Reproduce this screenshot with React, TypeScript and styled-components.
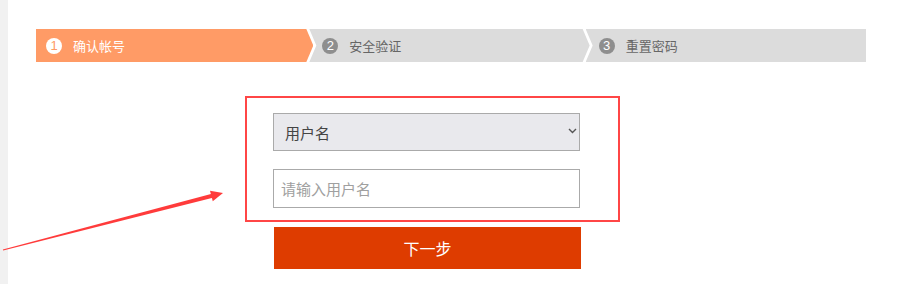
import React from "react";
import styled, { createGlobalStyle } from "styled-components";

const Global = createGlobalStyle`
  html, body { margin: 0; padding: 0; background: #fff; overflow: hidden; }
  body { font-family: "Noto Sans CJK SC", "Noto Sans", sans-serif; }
  * { box-sizing: border-box; }
`;

const Page = styled.div`
  position: relative;
  display: flex;
  width: 920px;
  height: 284px;
`;

const SideStrip = styled.div`
  width: 8px;
  flex: none;
  background: #f1f1f1;
`;

const Main = styled.div`
  flex: 1;
  display: flex;
  flex-direction: column;
  padding-top: 29px;
  padding-left: 28px;
`;

const Steps = styled.div`
  display: flex;
  width: 830px;
  height: 33px;
`;

type StepProps = { $pos: "first" | "mid" | "last"; $active?: boolean };

const clipFor = (pos: StepProps["$pos"]) => {
  if (pos === "first")
    return "polygon(0 0, calc(100% - 7px) 0, 100% 50%, calc(100% - 7px) 100%, 0 100%)";
  if (pos === "mid")
    return "polygon(0 0, calc(100% - 7px) 0, 100% 50%, calc(100% - 7px) 100%, 0 100%, 7px 50%)";
  return "polygon(0 0, 100% 0, 100% 100%, 0 100%, 7px 50%)";
};

const Step = styled.div<StepProps>`
  flex: 1;
  display: flex;
  align-items: center;
  gap: 11px;
  margin-left: ${(p) => (p.$pos === "first" ? "0" : "-4px")};
  padding-left: ${(p) => (p.$pos === "first" ? "10px" : "13px")};
  background: ${(p) => (p.$active ? "#ff9b66" : "#dcdcdc")};
  color: ${(p) => (p.$active ? "#fff" : "#666")};
  font-size: 13px;
  clip-path: ${(p) => clipFor(p.$pos)};
`;

const StepNum = styled.span<{ $active?: boolean }>`
  width: 16px;
  height: 16px;
  border-radius: 50%;
  display: flex;
  align-items: center;
  justify-content: center;
  font-family: "Liberation Sans", Arial, sans-serif;
  font-size: 13px;
  font-weight: normal;
  background: ${(p) => (p.$active ? "#fff" : "#8e8e8e")};
  color: ${(p) => (p.$active ? "#ff9b66" : "#fff")};
`;

const StepLabel = styled.span`
  line-height: 1;
`;

const FormArea = styled.div`
  display: flex;
  flex-direction: column;
  margin-top: 34px;
  margin-left: 209px;
`;

const MarkedBox = styled.div`
  width: 375px;
  height: 126px;
  border: 2px solid #ff4646;
  padding: 15px 0 0 26px;
  display: flex;
  flex-direction: column;
  gap: 18px;
`;

const SelectWrap = styled.div`
  position: relative;
  width: 307px;
  height: 38px;
`;

const Select = styled.select`
  appearance: none;
  width: 100%;
  height: 100%;
  border: 1px solid #aaa;
  background: #e9e9ed;
  color: #444;
  font-family: "Noto Sans CJK SC", sans-serif;
  font-size: 15px;
  padding: 0 0 0 11px;
  outline: none;
  border-radius: 0;
`;

const Chevron = styled.svg`
  position: absolute;
  right: 3px;
  top: 15px;
  pointer-events: none;
`;

const TextInput = styled.input`
  width: 307px;
  height: 39px;
  border: 1px solid #aaa;
  padding: 0 0 0 7px;
  font-family: "Noto Sans CJK SC", sans-serif;
  font-size: 15px;
  color: #333;
  outline: none;
  &::placeholder { color: #a0a0a0; }
`;

const NextButton = styled.button`
  width: 307px;
  height: 42px;
  margin-top: 5px;
  margin-left: 29px;
  border: none;
  background: #de3c00;
  color: #fff;
  font-family: "Noto Sans CJK SC", sans-serif;
  font-size: 16px;
  cursor: pointer;
`;

const Annotation = styled.svg`
  position: absolute;
  left: 0;
  top: 0;
  pointer-events: none;
`;

export default function App() {
  // arrow geometry
  const sx = 3, sy = 250, tx = 223, ty = 193;
  const dx = tx - sx, dy = ty - sy;
  const len = Math.hypot(dx, dy);
  const ux = dx / len, uy = dy / len;
  const px = -uy, py = ux;
  const headL = 12, headW = 5.5;
  const bx = tx - ux * headL, by = ty - uy * headL;
  const shaftEnd = 2;
  const startW = 0.5;
  const shaft = [
    [sx + px * startW, sy + py * startW],
    [bx + ux * 1 + px * shaftEnd, by + uy * 1 + py * shaftEnd],
    [bx + ux * 1 - px * shaftEnd, by + uy * 1 - py * shaftEnd],
    [sx - px * startW, sy - py * startW],
  ]
    .map((p) => p.join(","))
    .join(" ");
  const head = [
    [tx, ty],
    [bx + px * headW, by + py * headW],
    [bx - px * headW, by - py * headW],
  ]
    .map((p) => p.join(","))
    .join(" ");

  return (
    <>
      <Global />
      <Page>
        <SideStrip />
        <Main>
          <Steps>
            <Step $pos="first" $active>
              <StepNum $active>1</StepNum>
              <StepLabel>确认帐号</StepLabel>
            </Step>
            <Step $pos="mid">
              <StepNum>2</StepNum>
              <StepLabel>安全验证</StepLabel>
            </Step>
            <Step $pos="last">
              <StepNum>3</StepNum>
              <StepLabel>重置密码</StepLabel>
            </Step>
          </Steps>
          <FormArea>
            <MarkedBox>
              <SelectWrap>
                <Select defaultValue="username">
                  <option value="username">用户名</option>
                </Select>
                <Chevron width="9" height="6" viewBox="0 0 9 6">
                  <path d="M1 1 L4.5 4.5 L8 1" fill="none" stroke="#555" strokeWidth="1.4" />
                </Chevron>
              </SelectWrap>
              <TextInput placeholder="请输入用户名" />
            </MarkedBox>
            <NextButton>下一步</NextButton>
          </FormArea>
        </Main>
        <Annotation width="920" height="284" viewBox="0 0 920 284">
          <polygon points={shaft} fill="#ff3b3b" />
          <polygon points={head} fill="#ff3b3b" />
        </Annotation>
      </Page>
    </>
  );
}
